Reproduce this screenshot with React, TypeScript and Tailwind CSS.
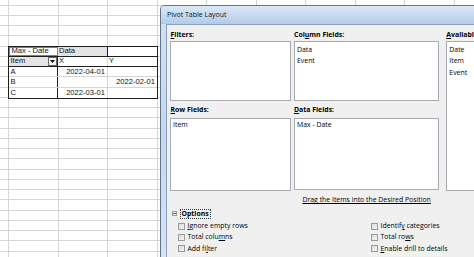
import React from "react";

const ROWS = 26;
const COLS = 11;

function Grid() {
  const cells = [];
  for (let r = 0; r < ROWS; r++) {
    for (let c = 0; c < COLS; c++) {
      cells.push(
        <div key={`${r}-${c}`} className="border-r border-b border-[#d6d6d6]" />
      );
    }
  }
  return <>{cells}</>;
}

function PivotTable() {
  const cell = "flex items-center px-[1.5px] whitespace-nowrap overflow-hidden";
  return (
    <div
      className="col-start-2 col-span-3 row-start-6 row-span-5 -mt-[1px] -ml-[1px] mb-[-1px] border-[1.5px] border-[#1e1e1e] bg-white flex flex-col text-[7.6px] text-[#111] leading-none"
      style={{ fontFamily: '"Liberation Sans", Arial, sans-serif' }}
    >
      <div className="flex h-[10px] border-b-[1.5px] border-[#1e1e1e]">
        <div className={`${cell} w-[48.5px] border border-[#4a8ad8]`}>Max - Date</div>
        <div className={`${cell} w-[50px] bg-[#e4e4e4] border-r-[1.5px] border-[#1e1e1e]`}>Data</div>
        <div className={`${cell} flex-1`}></div>
      </div>
      <div className="flex h-[10px] border-b-[1.5px] border-[#1e1e1e]">
        <div className="flex w-[48.5px] items-center border-r-[1.5px] border-[#1e1e1e]">
          <div className={`${cell} flex-1 h-full bg-[#e4e4e4]`}>Item</div>
          <div className="w-[9px] h-[9px] bg-[#f4f4f4] border border-[#6a6a6a] flex items-center justify-center">
            <svg width="5" height="3" viewBox="0 0 5 3">
              <path d="M0 0 H5 L2.5 3 Z" fill="#111" />
            </svg>
          </div>
        </div>
        <div className={`${cell} w-[50px] border-r border-[#d6d6d6]`}>X</div>
        <div className={`${cell} flex-1`}>Y</div>
      </div>
      {[
        ["A", "2022-04-01", ""],
        ["B", "", "2022-02-01"],
        ["C", "2022-03-01", ""],
      ].map((row, i) => (
        <div
          key={i}
          className={`flex flex-1 ${i < 2 ? "border-b border-[#d6d6d6]" : ""}`}
        >
          <div className={`${cell} w-[48.5px] border-r-[1.5px] border-[#1e1e1e]`}>{row[0]}</div>
          <div className={`${cell} w-[50px] justify-end border-r border-[#d6d6d6]`}>{row[1]}</div>
          <div className={`${cell} flex-1 justify-end`}>{row[2]}</div>
        </div>
      ))}
    </div>
  );
}

function Mn({ children }: { children: React.ReactNode }) {
  return <span className="underline underline-offset-[1px]">{children}</span>;
}

function Checkbox({ label }: { label: React.ReactNode }) {
  return (
    <div className="flex items-center h-[11.3px] gap-[3px] whitespace-nowrap">
      <div className="w-[7px] h-[7px] border border-[#9a9a9a] bg-gradient-to-br from-[#dcdcdc] to-[#f6f6f6]" />
      <span>{label}</span>
    </div>
  );
}

function ListBox({ items, className }: { items: string[]; className: string }) {
  return (
    <div className={`bg-white border border-[#a9abb0] pt-[1px] pl-[2px] ${className}`}>
      {items.map((t) => (
        <div key={t} className="h-[11.5px] flex items-center">
          {t}
        </div>
      ))}
    </div>
  );
}

function Dialog() {
  return (
    <div
      className="absolute left-[160px] top-[5px] w-[330px] h-[260px] border border-[#60748c] rounded-t-[4px] bg-gradient-to-b from-[#d3e2f4] via-[#c4d7ee] to-[#d8e5f4] flex flex-col text-[6.9px] text-[#000]"
      style={{ fontFamily: '"Open Sans", "Noto Sans", sans-serif' }}
    >
      <div className="h-[18px] flex items-center pl-[6px] text-[7px] text-[#111] bg-gradient-to-b from-[#dce9f7] to-[#b3cbe8] rounded-t-[3px]">
        Pivot Table Layout
      </div>
      <div className="flex-1 ml-[5px] border border-[#8aa0bd] bg-[#f0f0f0] pl-[3px] flex flex-col">
        <div className="flex pt-[5px]">
          <div className="w-[121px] flex flex-col">
            <div className="h-[11px] flex items-center font-bold pl-[0.5px]">
              <span><Mn>F</Mn>ilters:</span>
            </div>
            <div className="h-[60px] bg-white border border-[#a9abb0]" />
            <div className="h-[16.6px] flex items-center pt-[2px] font-bold pl-[0.5px]">
              <span><Mn>R</Mn>ow Fields:</span>
            </div>
            <ListBox items={["Item"]} className="h-[73.4px]" />
          </div>
          <div className="w-[145.3px] ml-[3px] flex flex-col">
            <div className="h-[11px] flex items-center font-bold">
              <span>Col<Mn>u</Mn>mn Fields:</span>
            </div>
            <ListBox items={["Data", "Event"]} className="h-[60px] pt-[2px]" />
            <div className="h-[16.6px] flex items-center pt-[2px] font-bold">
              <span><Mn>D</Mn>ata Fields:</span>
            </div>
            <ListBox items={["Max - Date"]} className="h-[72.4px]" />
          </div>
          <div className="ml-[7px] w-[40px] flex flex-col">
            <div className="h-[11px] flex items-center font-bold whitespace-nowrap">
              <span><Mn>A</Mn>vailable Fields:</span>
            </div>
            <ListBox items={["Date", "Item", "Event"]} className="h-[150px] pt-[2px]" />
          </div>
        </div>
        <div className="flex mt-[2px]">
          <div className="w-[121px]" />
          <div className="w-[145.3px] ml-[3px] h-[15px] flex items-center justify-center">
            <span className="underline underline-offset-[1px] whitespace-nowrap">
              Drag the Items into the Desired Position
            </span>
          </div>
        </div>
        <div className="flex items-center h-[11px] pl-[1.5px] gap-[3px]">
          <div className="w-[5px] h-[5px] border border-[#9a9a9a] bg-white flex items-center justify-center">
            <div className="w-[3px] h-[1px] bg-[#555]" />
          </div>
          <div className="border border-dotted border-[#333] px-[1px] font-bold leading-[8px]">
            Options
          </div>
        </div>
        <div className="flex pl-[7.5px] pt-[1.5px]">
          <div className="w-[193px] flex flex-col">
            <Checkbox label={<><Mn>I</Mn>gnore empty rows</>} />
            <Checkbox label={<>Total colu<Mn>m</Mn>ns</>} />
            <Checkbox label={<>Add fi<Mn>l</Mn>ter</>} />
          </div>
          <div className="flex flex-col">
            <Checkbox label={<>Identif<Mn>y</Mn> categories</>} />
            <Checkbox label={<>Total ro<Mn>w</Mn>s</>} />
            <Checkbox label={<><Mn>E</Mn>nable drill to details</>} />
          </div>
        </div>
      </div>
    </div>
  );
}

export default function App() {
  return (
    <div className="relative w-[474px] h-[257px] overflow-hidden bg-white">
      <div className="grid grid-cols-[9px_repeat(10,49.5px)] grid-rows-[5.5px_repeat(25,10.25px)]">
        <Grid />
        <PivotTable />
      </div>
      <Dialog />
    </div>
  );
}
